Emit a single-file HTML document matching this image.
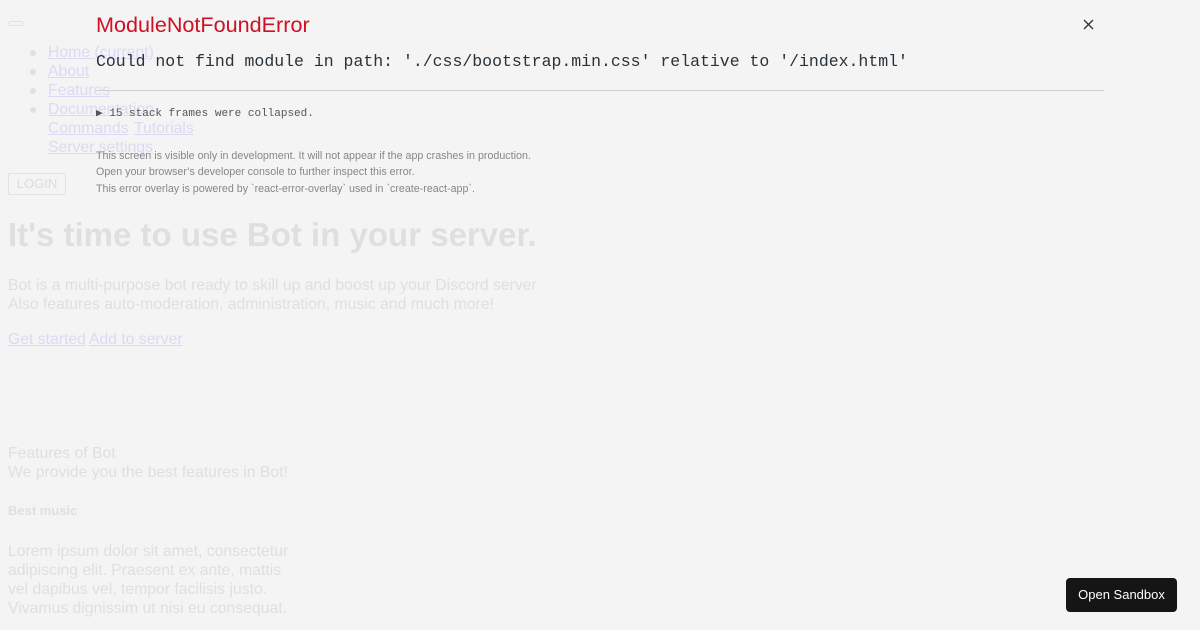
<!DOCTYPE html>
<html><head><style>
*{margin:0;padding:0;box-sizing:border-box}
body{width:1200px;height:630px;background:#f4f4f4;font-family:"Liberation Sans",sans-serif;position:relative;overflow:hidden}
.a{position:absolute;white-space:nowrap}
.g{color:#dfdfdf;font-size:15.75px;line-height:19px}
.l{color:#dadaf5;text-decoration:underline;font-size:15.75px;line-height:19px}
.dot{position:absolute;width:6px;height:6px;border-radius:50%;background:#e0e0e0}
.f{font-size:10.7px;color:#878787;line-height:16px}
</style></head><body>
<div class="a" style="left:8px;top:21px;width:16px;height:5px;border:1px solid #e2e2e2;border-radius:3px"></div>
<div class="dot" style="left:30px;top:50px"></div><div class="a l" style="left:48px;top:43px">Home (current)</div>
<div class="dot" style="left:30px;top:69px"></div><div class="a l" style="left:48px;top:62px">About</div>
<div class="dot" style="left:30px;top:88px"></div><div class="a l" style="left:48px;top:81px">Features</div>
<div class="dot" style="left:30px;top:107px"></div><div class="a l" style="left:48px;top:100px">Documentation</div>
<div class="a l" style="left:48px;top:119px">Commands</div><div class="a l" style="left:134px;top:119px">Tutorials</div>
<div class="a l" style="left:48px;top:138px">Server settings</div>
<div class="a" style="left:8px;top:173px;width:58px;height:22px;border:1px solid #e2e2e2;border-radius:2px;color:#dcdcdc;font-size:13px;line-height:20px;text-align:center">LOGIN</div>
<div class="a" style="left:8px;top:216px;font-size:33px;font-weight:bold;color:#dfdfdf;line-height:38px">It's time to use Bot in your server.</div>
<div class="a g" style="left:8px;top:276px">Bot is a multi-purpose bot ready to skill up and boost up your Discord server</div>
<div class="a g" style="left:8px;top:295px">Also features auto-moderation, administration, music and much more!</div>
<div class="a l" style="left:8px;top:330px">Get started</div><div class="a l" style="left:89px;top:330px">Add to server</div>
<div class="a g" style="left:8px;top:444px">Features of Bot</div>
<div class="a g" style="left:8px;top:463px">We provide you the best features in Bot!</div>
<div class="a" style="left:8px;top:503px;font-size:13px;font-weight:bold;color:#dfdfdf;line-height:16px">Best music</div>
<div class="a g" style="left:8px;top:542px">Lorem ipsum dolor sit amet, consectetur</div>
<div class="a g" style="left:8px;top:561px">adipiscing elit. Praesent ex ante, mattis</div>
<div class="a g" style="left:8px;top:580px">vel dapibus vel, tempor facilisis justo.</div>
<div class="a g" style="left:8px;top:599px">Vivamus dignissim ut nisi eu consequat.</div>

<div class="a" style="left:96px;top:12px;font-size:21.6px;color:#ce1126;line-height:26px">ModuleNotFoundError</div>
<div class="a" style="left:96px;top:52px;font-family:'Liberation Mono',monospace;font-size:16.5px;color:#293238;line-height:20px">Could not find module in path: './css/bootstrap.min.css' relative to '/index.html'</div>
<div class="a" style="left:96px;top:90px;width:1008px;height:1px;background:#cfcfcf"></div>
<div class="a" style="left:96px;top:107px;font-family:'Liberation Mono',monospace;font-size:11px;color:#555;line-height:15px">▶ 15 stack frames were collapsed.</div>
<div class="a f" style="left:96px;top:148px">This screen is visible only in development. It will not appear if the app crashes in production.</div>
<div class="a f" style="left:96px;top:164px">Open your browser’s developer console to further inspect this error.</div>
<div class="a f" style="left:96px;top:181px">This error overlay is powered by `react-error-overlay` used in `create-react-app`.</div>
<svg class="a" style="left:1083px;top:19px" width="11" height="11" viewBox="0 0 11 11"><path d="M1 1L10 10M10 1L1 10" stroke="#333" stroke-width="1.3"/></svg>
<div class="a" style="left:1066px;top:578px;width:111px;height:34px;background:#151515;border-radius:4px;color:#fff;font-size:13px;line-height:34px;text-align:center">Open Sandbox</div>
</body></html>
